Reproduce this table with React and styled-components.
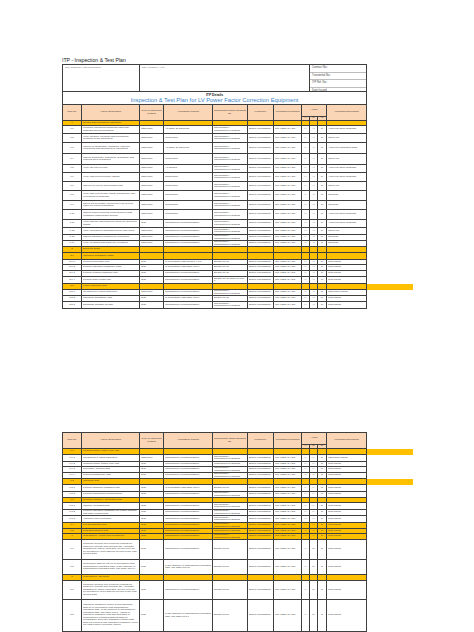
import React from 'react';
import styled, { createGlobalStyle } from 'styled-components';

const GlobalStyle = createGlobalStyle`
  html, body { margin: 0; padding: 0; background: #ffffff; }
  body { font-family: "Liberation Sans", Arial, sans-serif; color: #333; }
`;

const Page = styled.div`
  width: 474px;
  height: 632px;
  overflow: hidden;
  box-sizing: border-box;
  padding: 56px 0 0 62px;
`;

const DocTitle = styled.div`
  font-size: 5.2px;
  line-height: 8px;
  height: 8px;
  color: #222;
  white-space: nowrap;
`;

const Sheet = styled.table`
  border-collapse: collapse;
  table-layout: fixed;
  width: 350px;
  margin-top: ${p => p.$gap || 0}px;
`;

const Row = styled.tr`
  height: ${p => p.$h}px;
  & > td > div {
    max-height: ${p => Math.max(p.$h - 1, 2.5)}px;
    overflow: hidden;
  }
`;

const tones = {
  peach: '#fbd6b6',
  orange: '#ffc000',
  none: 'transparent',
};

const Cell = styled.td`
  border: 1px solid #3f3f3f;
  padding: 0 1px;
  font-size: 2.5px;
  line-height: 2.5px;
  color: #3a3a3a;
  vertical-align: middle;
  text-align: ${p => p.$align || 'left'};
  background: ${p => tones[p.$tone || 'none']};
  overflow: hidden;
  word-break: break-word;
`;

const Bleed = styled.td`
  border: none;
  padding: 0;
  background: ${p => (p.$fill ? '#ffc000' : 'transparent')};
`;

const HeadCell = styled(Cell)`
  background: #fbd6b6;
  color: #3a2e26;
  text-align: center;
  line-height: 2.8px;
`;

const BoxCell = styled.td`
  border: 1px solid #3f3f3f;
  padding: 1px 2px;
  vertical-align: top;
  font-size: 2.5px;
  line-height: 3px;
  color: #666;
`;

const InfoStack = styled.div`
  display: flex;
  flex-direction: column;
  margin: -1px -2px;
`;

const InfoLine = styled.div`
  height: 6.5px;
  line-height: 6.5px;
  padding-left: 2px;
  font-size: 2.7px;
  color: #444;
  border-bottom: 1px solid #bdbdbd;
  &:last-child { border-bottom: none; }
`;

const DetailsCell = styled.td`
  border: 1px solid #3f3f3f;
  padding: 0;
  text-align: center;
  vertical-align: top;
`;

const DetailsLabel = styled.div`
  font-size: 3.4px;
  line-height: 4px;
  margin-top: 1px;
  font-weight: bold;
  color: #222;
`;

const PlanTitle = styled.div`
  font-size: 5.8px;
  line-height: 7px;
  color: #3b82c4;
  white-space: nowrap;
`;

const Clip = styled.div``;

const COLS = [19, 58, 24, 49, 35, 26, 28, 8, 8, 9, 40, 46];

const SPEC = "Specification / Manufacturer's drawing";
const FREQ = 'Before energisation';
const PERS = 'QC/ MEO/ QA/QC';

const page1 = [
  { sec: true, no: '1', act: 'Design and Mechanical Inspection', h: 5 },
  { no: '1.1', act: 'Compare equipment nameplate data with drawings and specifications', type: 'Inspection', acc: 'As same as approved', doc: 'Approved Shop drawings', h: 8 },
  { no: '1.2', act: 'Verify physical, electrical and mechanical condition of the equipment', type: 'Inspection', acc: 'Compliance', doc: 'Check list', h: 9 },
  { no: '1.3', act: 'Inspect all anchorage, alignment, required clearances and grounding for equipment', type: 'Inspection', acc: 'As same as approved', doc: 'Approved Installation Dwg', h: 11 },
  { no: '1.4', act: 'Inspect anchorage, alignment, grounding, and required area clearances', type: 'Inspection', acc: 'Compliance', doc: 'Check list', h: 11 },
  { no: '1.5', act: 'Verify the unit is clean', type: 'Inspection', acc: 'As defined', doc: 'Approved Shop drawings', h: 8 },
  { no: '1.6', act: 'Verify fuse/circuit-breaker ratings', type: 'Inspection', acc: 'Compliance', doc: 'Approved Shop drawings', h: 9 },
  { no: '1.7', act: 'Inspect for correct and identified tag', type: 'Inspection', acc: 'Compliance', doc: 'Check list', h: 9 },
  { no: '1.8', act: 'Verify that current and voltage transformer ratio correspond to drawings', type: 'Inspection', acc: 'Compliance', doc: 'Checklist', h: 10 },
  { no: '1.9', act: 'Check CT secondary wiring from HMI to PFC panel for proper termination', type: 'Inspection', acc: 'Compliance', doc: 'Checklist', h: 9 },
  { no: '1.10', act: 'Inspect bolted electrical connections for high resistance using torque wrench', type: 'Inspection', acc: 'Compliance', doc: 'Approved Shop drawings', h: 10 },
  { no: '1.11', act: 'Verify that the capacitors are sized per approved design', type: 'Test', acc: 'Manufacturer recommendation', doc: 'Approved Shop drawings', h: 8 },
  { no: '1.12', act: 'Verify operation of switching device and relays', type: 'Inspection', acc: 'Manufacturer recommendation', doc: 'Check list', h: 7 },
  { no: '1.13', act: 'Inspect discharge resistors for connection', type: 'Inspection', acc: 'Manufacturer recommendation', doc: 'Checklist', h: 6 },
  { no: '1.14', act: 'Verify all switch and fuses are in position', type: 'Inspection', acc: 'Manufacturer recommendation', doc: 'Checklist', h: 6 },
  { sec: true, no: '2', act: 'Electrical Tests', h: 6 },
  { sec: true, no: '2.1', act: 'Insulation Resistance Tests', h: 7 },
  { no: '2.1.1', act: 'Perform bolt torque test', type: 'Test', acc: 'In accordance with Section 4.3.3', spec: 'BS EN 61439', doc: 'Test results', h: 5 },
  { no: '2.1.2', act: 'Perform insulation resistance tests', type: 'Test', acc: 'In accordance with Table 100.1', spec: 'BS EN 61439', doc: 'Test results', h: 6 },
  { no: '2.1.3', act: 'Perform contact resistance test', type: 'Test', acc: 'Manufacturer recommendation', spec: 'BS EN 61439', doc: 'Test results', h: 6 },
  { no: '2.1.4', act: 'Perform high voltage test', type: 'Test', acc: 'Manufacturer recommendation', spec: 'BS EN 61439 Table 10 Sec 1', doc: 'Test results', h: 7 },
  { sec: true, bleed: true, no: '2.2', act: 'Power Capacitor Test', h: 6 },
  { no: '2.2.1', act: 'Mechanical & visual inspection', type: 'Inspection', acc: 'Manufacturer recommendation', doc: 'Inspection results', h: 6 },
  { no: '2.2.2', act: 'Insulation Resistance Test', type: 'Test', acc: 'In accordance with Table 100.1', spec: 'BS EN 61439', doc: 'Test results', h: 6 },
  { no: '2.2.3', act: 'Discharge Resistor off Test', type: 'Test', acc: 'Manufacturer recommendation', doc: 'Test results', h: 7 },
];

const LONG1 =
  'Complete blocked non-electrical contacts for subject to operate and energise the Automatic Changeover, where each step, device of all will be operated by more than 50 percent of the load. Record data.';
const LONG2 =
  'Test subject shall be set up in accordance with manufacturer published data. In the absence of manufacturer published data, use Table 100.14.';
const LONG3 =
  'Insulation resistance values of bus insulation shall be in accordance with manufacturer published data. In the absence of manufacturer published data, use Table 100.1. Values of insulation resistance less than this table or manufacturer recommendations shall be investigated. Dielectric withstand voltage tests shall not proceed until insulation resistance levels are raised above minimum values.';

const page2 = [
  { sec: true, bleed: true, no: '6.1', act: 'Modified power control relay test', h: 6 },
  { no: '6.1.1', act: 'Mechanical & visual inspection', type: 'Inspection', acc: 'Manufacturer recommendation', doc: 'Inspection results', h: 7 },
  { no: '6.1.2', act: 'Modified power control relay test', type: 'Test', acc: 'Manufacturer recommendation', spec: "Manufacturer's drawing", doc: 'Test results', h: 5 },
  { no: '6.1.3', act: 'Secondary injection Test', type: 'Test', acc: 'Manufacturer recommendation', doc: 'Test results', h: 6 },
  { no: '6.1.4', act: 'Current Transformer Test', type: 'Test', acc: 'Manufacturer recommendation', doc: 'Test results', h: 6 },
  { sec: true, bleed: true, no: '6.2', act: 'Capacitor Test', h: 6 },
  { no: '6.2.1', act: 'Perform capacitor resistance test', type: 'Test', acc: 'In accordance with Table 100.1', spec: 'BS EN 61439', doc: 'Test results', h: 7 },
  { no: '6.2.2', act: 'Perform capacitance measurement', type: 'Test', acc: 'Manufacturer recommendation', doc: 'Test results', h: 6 },
  { sec: true, no: '6.3', act: 'Reactor/Harmonic Attenuation Test', h: 5 },
  { no: '6.3.1', act: 'Inductor verification test', type: 'Test', acc: 'Manufacturer recommendation', doc: 'Test results', h: 7 },
  { no: '6.3.2', act: 'Perform insulation resistance on reactor winding and other components', type: 'Test', acc: 'Manufacturer recommendation', doc: 'Test results', h: 6 },
  { no: '6.3.3', act: 'Harmonic filter Procedure', type: 'Test', acc: 'Manufacturer recommendation', doc: 'Test results', h: 7 },
  { tone: 'orange', no: '6.4', act: 'Pre Energisation test', type: 'Test', acc: 'Manufacturer recommendation', doc: 'Test results', h: 6 },
  { tone: 'orange', no: '6.5', act: 'Post Energisation Test', type: 'Test', acc: 'Manufacturer recommendation', spec: "Manufacturer's drawing", doc: 'Test results', h: 5 },
  { tone: 'orange', no: '7', act: 'Test Subject - Power and Mechanical', type: 'Test', acc: 'Manufacturer recommendation', doc: 'Test results', h: 6 },
  { no: '7.1', act: LONG1, type: 'Test', acc: 'Manufacturer recommendation', spec: 'BS EN 61439', actions: ['H', 'W', 'R'], doc: 'Test results', h: 20 },
  { no: '7.2', act: LONG2, type: 'Test', acc: 'In the absence of manufacturer published data, use Table 100.14', spec: 'BS EN 61439', actions: ['H', 'W', 'R'], doc: 'Test results', h: 15 },
  { sec: true, no: '8', act: 'Test Subject - Electrical', h: 6 },
  { no: '8.1', act: LONG1, type: 'Test', acc: 'Manufacturer recommendation', spec: 'BS EN 61439', actions: ['H', 'W', 'R'], doc: 'Test results', h: 19 },
  { no: '8.2', act: LONG3, type: 'Test', acc: 'In the absence of manufacturer published data, use Table 100.1', spec: 'BS EN 61439', actions: ['H', 'W', 'R'], doc: 'Test results', h: 32 },
];

function Columns() {
  return (
    <colgroup>
      {COLS.map((w, i) => (
        <col key={i} style={{ width: w }} />
      ))}
    </colgroup>
  );
}

function HeaderRows() {
  return (
    <>
      <Row $h={12}>
        <HeadCell rowSpan={2}><Clip>Item No.</Clip></HeadCell>
        <HeadCell rowSpan={2}><Clip>Activity Description</Clip></HeadCell>
        <HeadCell rowSpan={2}><Clip>Type of Inspection Method</Clip></HeadCell>
        <HeadCell rowSpan={2}><Clip>Acceptance Criteria</Clip></HeadCell>
        <HeadCell rowSpan={2}><Clip>Specification and/or Drawing No.</Clip></HeadCell>
        <HeadCell rowSpan={2}><Clip>Frequency</Clip></HeadCell>
        <HeadCell rowSpan={2}><Clip>Verification Personnel</Clip></HeadCell>
        <HeadCell colSpan={3}><Clip>Action</Clip></HeadCell>
        <HeadCell rowSpan={2}><Clip>Verification Document</Clip></HeadCell>
        <Bleed />
      </Row>
      <Row $h={4}>
        <HeadCell><Clip>H</Clip></HeadCell>
        <HeadCell><Clip>W</Clip></HeadCell>
        <HeadCell><Clip>R</Clip></HeadCell>
        <Bleed />
      </Row>
    </>
  );
}

function DataRow({ r }) {
  if (r.sec) {
    return (
      <Row $h={r.h}>
        <Cell $tone="orange" $align="center"><Clip>{r.no}</Clip></Cell>
        <Cell $tone="orange"><Clip>{r.act}</Clip></Cell>
        {Array.from({ length: 9 }).map((_, i) => (
          <Cell key={i} $tone="orange" />
        ))}
        <Bleed $fill={r.bleed} />
      </Row>
    );
  }
  const tone = r.tone || 'none';
  const actions = r.actions || ['H', 'H', 'W'];
  return (
    <Row $h={r.h}>
      <Cell $tone={tone} $align="center"><Clip>{r.no}</Clip></Cell>
      <Cell $tone={tone}><Clip>{r.act}</Clip></Cell>
      <Cell $tone={tone}><Clip>{r.type}</Clip></Cell>
      <Cell $tone={tone}><Clip>{r.acc}</Clip></Cell>
      <Cell $tone={tone}><Clip>{r.spec || SPEC}</Clip></Cell>
      <Cell $tone={tone}><Clip>{r.freq || FREQ}</Clip></Cell>
      <Cell $tone={tone}><Clip>{r.pers || PERS}</Clip></Cell>
      {actions.map((a, i) => (
        <Cell key={i} $tone={tone} $align="center"><Clip>{a}</Clip></Cell>
      ))}
      <Cell $tone={tone}><Clip>{r.doc}</Clip></Cell>
      <Bleed $fill={r.bleed} />
    </Row>
  );
}

export default function App() {
  return (
    <>
      <GlobalStyle />
      <Page>
        <DocTitle>ITP - Inspection &amp; Test Plan</DocTitle>
        <Sheet>
          <Columns />
          <tbody>
            <Row $h={27}>
              <BoxCell colSpan={2}>Job: Customer / Site Description</BoxCell>
              <BoxCell colSpan={6}>Site: Location / Area</BoxCell>
              <BoxCell colSpan={3}>
                <InfoStack>
                  <InfoLine>Contract No.:</InfoLine>
                  <InfoLine>Transmittal No.:</InfoLine>
                  <InfoLine>ITP Ref. No.:</InfoLine>
                  <InfoLine>Date Issued:</InfoLine>
                </InfoStack>
              </BoxCell>
              <Bleed />
            </Row>
            <Row $h={13}>
              <DetailsCell colSpan={11}>
                <DetailsLabel>ITP Details</DetailsLabel>
                <PlanTitle>Inspection &amp; Test Plan for LV Power Factor Correction Equipment</PlanTitle>
              </DetailsCell>
              <Bleed />
            </Row>
            <HeaderRows />
            {page1.map((r, i) => (
              <DataRow key={i} r={r} />
            ))}
          </tbody>
        </Sheet>
        <Sheet $gap={123}>
          <Columns />
          <tbody>
            <HeaderRows />
            {page2.map((r, i) => (
              <DataRow key={i} r={r} />
            ))}
          </tbody>
        </Sheet>
      </Page>
    </>
  );
}
